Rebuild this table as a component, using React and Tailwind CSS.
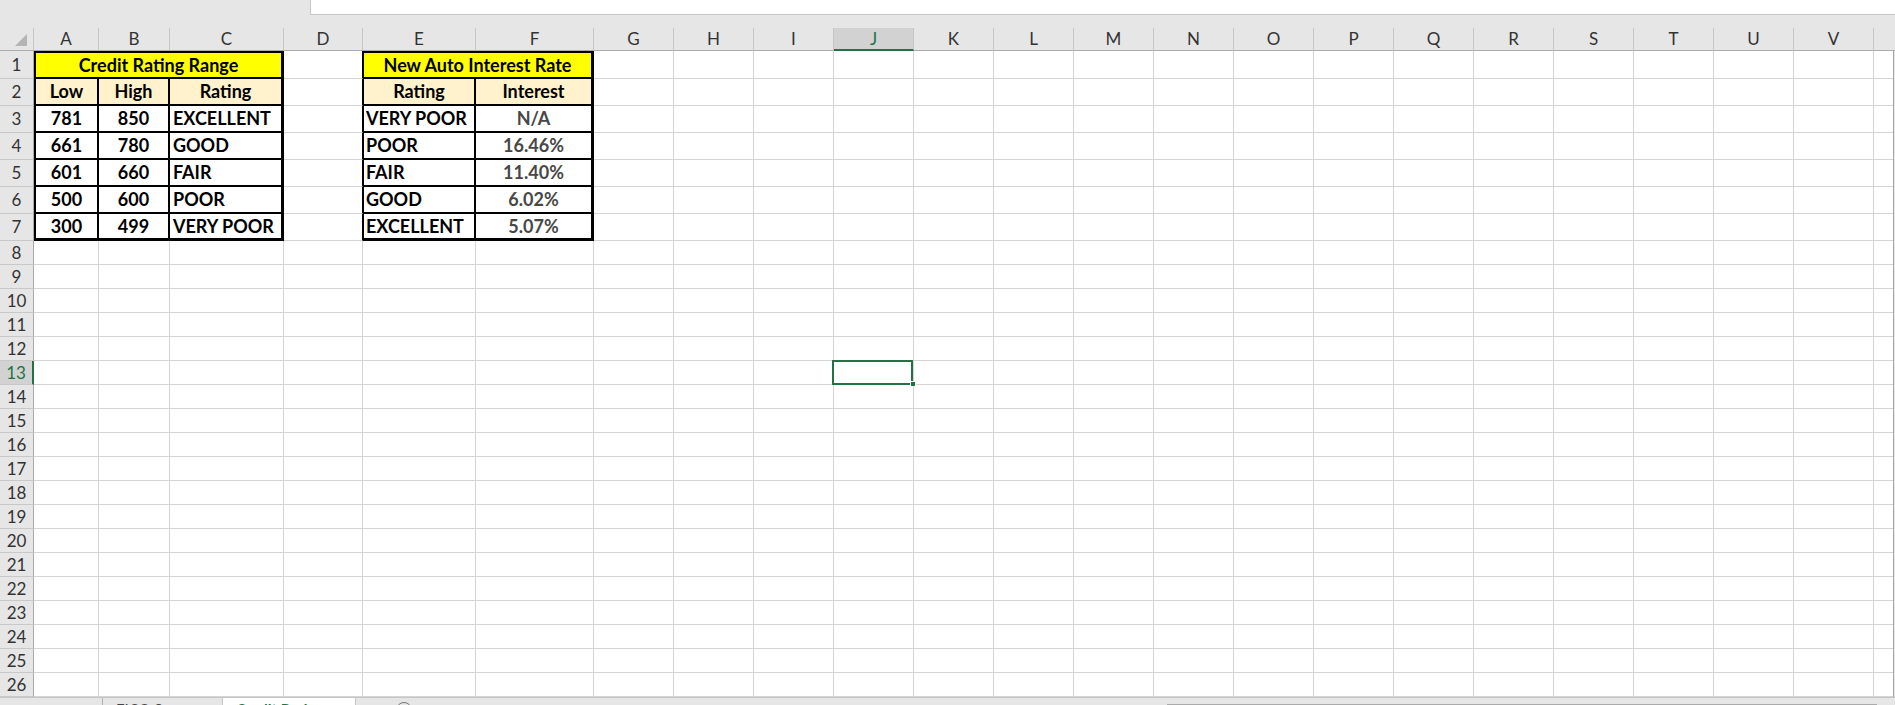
import React from "react";

const COLS = [
  { name: "A", w: "w-[65px]" },
  { name: "B", w: "w-[71px]" },
  { name: "C", w: "w-[114px]" },
  { name: "D", w: "w-[79px]" },
  { name: "E", w: "w-[113px]" },
  { name: "F", w: "w-[118px]" },
  ...["G", "H", "I", "J", "K", "L", "M", "N", "O", "P", "Q", "R", "S", "T", "U", "V"].map((n) => ({ name: n, w: "w-[80px]" })),
];

const REST = COLS.slice(6);

const creditRows = [
  ["781", "850", "EXCELLENT"],
  ["661", "780", "GOOD"],
  ["601", "660", "FAIR"],
  ["500", "600", "POOR"],
  ["300", "499", "VERY POOR"],
];

const rateRows = [
  ["VERY POOR", "N/A"],
  ["POOR", "16.46%"],
  ["FAIR", "11.40%"],
  ["GOOD", "6.02%"],
  ["EXCELLENT", "5.07%"],
];

const RowHead = ({ n, active }) => (
  <div
    className={
      active
        ? "w-[34px] shrink-0 flex items-center justify-center font-normal text-[17px] bg-[#d2d2d2] text-[#217346] border-b border-b-[#c8c8c8] border-r-2 border-r-[#217346]"
        : "w-[34px] shrink-0 flex items-center justify-center font-normal text-[17px] text-[#333] border-b border-r border-b-[#c8c8c8] border-r-[#ababab]"
    }
  >
    {n}
  </div>
);

const Grid = ({ w, dark }) => (
  <div className={`${w} shrink-0 h-full bg-white border-r border-b border-[#d4d4d4] ${dark ? "border-r-black" : ""}`} />
);

const Tail = () => (
  <>
    <div className="w-[19px] shrink-0 h-full bg-white border-b border-[#d4d4d4]" />
    <div className="w-[1px] shrink-0 h-full bg-[#a6a6a6]" />
  </>
);

const RestCells = ({ activeJ }) =>
  REST.map((c) =>
    activeJ && c.name === "J" ? (
      <div key={c.name} className="w-[80px] shrink-0 h-full bg-white border-r border-b border-[#d4d4d4] relative">
        <div className="absolute -left-[2px] -top-[1px] w-[81px] h-[25px] border-2 border-[#217346]" />
        <div className="absolute -right-[3px] -bottom-[3px] w-[6px] h-[6px] bg-[#217346] border border-white" />
      </div>
    ) : (
      <Grid key={c.name} w={c.w} />
    )
  );

export default function App() {
  return (
    <div className="w-[1895px] h-[705px] overflow-hidden bg-[#e6e6e6] font-['Lato',sans-serif] select-none">
      {/* formula bar edge */}
      <div className="flex h-[28px]">
        <div className="w-[310px] shrink-0" />
        <div className="flex-1 h-[15px] bg-white border-l border-b border-[#c6c6c6]" />
      </div>

      {/* column headers */}
      <div className="flex h-[23px] text-[17px] text-[#333]">
        <div className="w-[34px] shrink-0 flex items-end justify-end pr-[6px] pb-[4px] border-r border-b border-r-[#c6c6c6] border-b-[#ababab]">
          <svg width="12" height="12" viewBox="0 0 12 12">
            <polygon points="12,0 12,12 0,12" fill="#b4b4b4" />
          </svg>
        </div>
        {COLS.map((c) =>
          c.name === "J" ? (
            <div key={c.name} className="w-[80px] shrink-0 h-full flex items-center justify-center bg-[#d2d2d2] text-[#217346] border-r border-r-[#c6c6c6] border-b-2 border-b-[#217346]">
              {c.name}
            </div>
          ) : (
            <div key={c.name} className={`${c.w} shrink-0 h-full flex items-center justify-center border-r border-b border-r-[#c6c6c6] border-b-[#ababab]`}>
              {c.name}
            </div>
          )
        )}
        <div className="flex-1 border-b border-[#ababab]" />
      </div>

      {/* row 1 */}
      <div className="flex h-[28px] text-[18px] font-bold text-black">
        <RowHead n={1} />
        <div className="w-[250px] shrink-0 flex items-center justify-center bg-[#ffff00] border-l-2 border-t-2 border-b-2 border-r-[3px] border-black">
          Credit Rating Range
        </div>
        <Grid w="w-[79px]" dark />
        <div className="w-[231px] shrink-0 flex items-center justify-center bg-[#ffff00] border-l border-t-2 border-b-2 border-r-[3px] border-black">
          New Auto Interest Rate
        </div>
        <RestCells />
        <Tail />
      </div>

      {/* row 2 */}
      <div className="flex h-[27px] text-[18px] font-bold text-black">
        <RowHead n={2} />
        <div className="w-[65px] shrink-0 flex items-center justify-center bg-[#fff2cc] border-l-2 border-r-2 border-b-2 border-black">Low</div>
        <div className="w-[71px] shrink-0 flex items-center justify-center bg-[#fff2cc] border-r-2 border-b-2 border-black">High</div>
        <div className="w-[114px] shrink-0 flex items-center justify-center bg-[#fff2cc] border-r-[3px] border-b-2 border-black">Rating</div>
        <Grid w="w-[79px]" dark />
        <div className="w-[113px] shrink-0 flex items-center justify-center bg-[#fff2cc] border-l border-r-2 border-b-2 border-black">Rating</div>
        <div className="w-[118px] shrink-0 flex items-center justify-center bg-[#fff2cc] border-r-[3px] border-b-2 border-black">Interest</div>
        <RestCells />
        <Tail />
      </div>

      {/* rows 3-7 */}
      {creditRows.map((r, i) => {
        const last = i === creditRows.length - 1;
        const bb = last ? "border-b-[3px]" : "border-b-2";
        return (
          <div key={i} className="flex h-[27px] text-[18px] font-bold text-black">
            <RowHead n={i + 3} />
            <div className={`w-[65px] shrink-0 flex items-center justify-center bg-white border-l-2 border-r-2 ${bb} border-black`}>{r[0]}</div>
            <div className={`w-[71px] shrink-0 flex items-center justify-center bg-white border-r-2 ${bb} border-black`}>{r[1]}</div>
            <div className={`w-[114px] shrink-0 flex items-center pl-[3px] whitespace-nowrap bg-white border-r-[3px] ${bb} border-black`}>{r[2]}</div>
            <Grid w="w-[79px]" dark />
            <div className={`w-[113px] shrink-0 flex items-center pl-[2px] whitespace-nowrap bg-white border-l border-r-2 ${bb} border-black`}>{rateRows[i][0]}</div>
            <div className={`w-[118px] shrink-0 flex items-center justify-center bg-white text-[#474747] border-r-[3px] ${bb} border-black`}>{rateRows[i][1]}</div>
            <RestCells />
            <Tail />
          </div>
        );
      })}

      {/* rows 8-26 */}
      {Array.from({ length: 19 }, (_, i) => i + 8).map((n) => (
        <div key={n} className="flex h-[24px]">
          <RowHead n={n} active={n === 13} />
          {COLS.slice(0, 6).map((c) => (
            <Grid key={c.name} w={c.w} />
          ))}
          <RestCells activeJ={n === 13} />
          <Tail />
        </div>
      ))}

      {/* sheet tabs */}
      <div className="flex h-[30px] border-t border-[#c6c6c6] bg-[#e6e6e6] text-[15px]">
        <div className="w-[103px] shrink-0 border-r border-[#b4b4b4]" />
        <div className="w-[119px] shrink-0 pl-[13px] text-[#444]">FICO Score</div>
        <div className="w-[134px] shrink-0 pl-[13px] bg-white font-bold text-[#217346] border-x border-[#c6c6c6]">Credit Rating</div>
        <div className="w-[811px] shrink-0 pl-[40px] pt-[4px]">
          <div className="w-[16px] h-[16px] rounded-full border border-[#777]" />
        </div>
        <div className="w-[20px] shrink-0 mt-[6px] h-[18px] border border-[#ababab] bg-[#e6e6e6]" />
        <div className="w-[657px] shrink-0 mt-[6px] h-[18px] border-y border-r border-[#ababab] bg-[#f4f4f4]" />
        <div className="w-[33px] shrink-0 mt-[6px] h-[18px] border-y border-r border-[#ababab] bg-[#e6e6e6]" />
      </div>
    </div>
  );
}
